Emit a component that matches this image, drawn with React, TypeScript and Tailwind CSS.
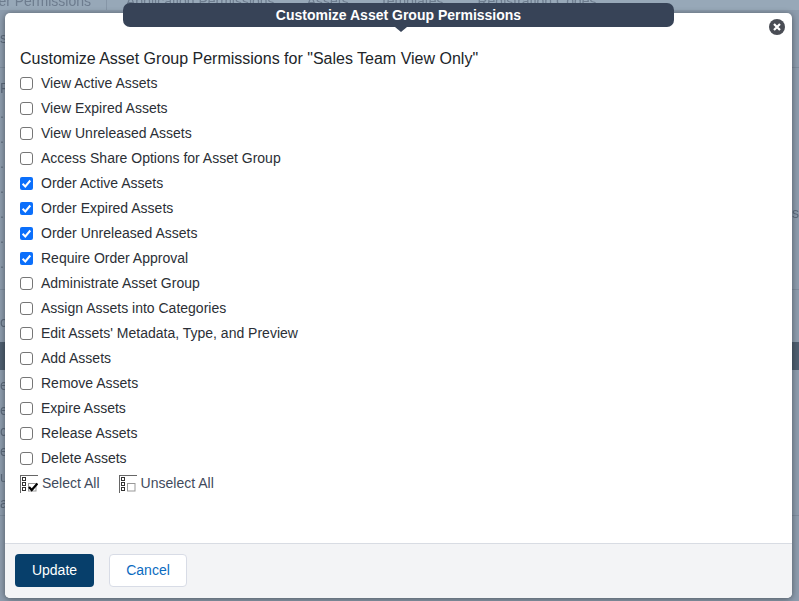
import React from 'react'

const permissions = [
  { label: 'View Active Assets', checked: false },
  { label: 'View Expired Assets', checked: false },
  { label: 'View Unreleased Assets', checked: false },
  { label: 'Access Share Options for Asset Group', checked: false },
  { label: 'Order Active Assets', checked: true },
  { label: 'Order Expired Assets', checked: true },
  { label: 'Order Unreleased Assets', checked: true },
  { label: 'Require Order Approval', checked: true },
  { label: 'Administrate Asset Group', checked: false },
  { label: 'Assign Assets into Categories', checked: false },
  { label: "Edit Assets' Metadata, Type, and Preview", checked: false },
  { label: 'Add Assets', checked: false },
  { label: 'Remove Assets', checked: false },
  { label: 'Expire Assets', checked: false },
  { label: 'Release Assets', checked: false },
  { label: 'Delete Assets', checked: false },
]

// slivers of the page that stick out left and right of the dialog
const backdropRows = [
  { h: 'h-[18px]', left: '' },
  { h: 'h-[20px]', left: 's' },
  { h: 'h-[20px]', left: '', line: true },
  { h: 'h-[10px]', left: '' },
  { h: 'h-[20px]', left: 'R' },
  { h: 'h-[2px]', left: '' },
  { h: 'h-[25px]', left: '.' },
  { h: 'h-[25px]', left: '.' },
  { h: 'h-[25px]', left: '.' },
  { h: 'h-[25px]', left: '.' },
  { h: 'h-[25px]', left: '.', right: 's' },
  { h: 'h-[25px]', left: '.' },
  { h: 'h-[25px]', left: '.' },
  { h: 'h-[15px]', left: '', line: true },
  { h: 'h-[22px]', left: '' },
  { h: 'h-[20px]', left: 'o' },
  { h: 'h-[10px]', left: '' },
  { h: 'h-[28px]', left: '', dark: true },
  { h: 'h-[5px]', left: '' },
  { h: 'h-[20px]', left: 'e' },
  { h: 'h-[5px]', left: '' },
  { h: 'h-[20px]', left: 'e' },
  { h: 'h-[22px]', left: 'c' },
  { h: 'h-[18px]', left: 'e' },
  { h: 'h-[8px]', left: '' },
  { h: 'h-[18px]', left: 'u' },
  { h: 'h-[8px]', left: '' },
  { h: 'h-[18px]', left: 'a' },
  { h: 'h-[4px]', left: '', line: true },
]

function PermissionRow({ label, checked }: { label: string; checked: boolean }) {
  return (
    <div className="flex h-[25px] items-center">
      {checked ? (
        <span className="flex h-[13px] w-[13px] items-center justify-center rounded-[2px] bg-[#0b6ffb]">
          <svg viewBox="0 0 13 13" className="h-[13px] w-[13px]" fill="none">
            <path d="M2.6 6.8l2.7 2.7 5-6" stroke="#fff" strokeWidth="2" />
          </svg>
        </span>
      ) : (
        <span className="h-[13px] w-[13px] rounded-[3px] border border-[#767676] bg-white" />
      )}
      <span className="ml-[8px] text-[14px] text-[#2b2f36]">{label}</span>
    </div>
  )
}

function ListIcon({ checked }: { checked: boolean }) {
  return (
    <svg viewBox="0 0 18 18" className="h-[18px] w-[18px] shrink-0" fill="none">
      <path d="M.5 0v18M.5 .5H18" stroke="#666" strokeWidth="1" />
      <rect x="2.5" y="2.5" width="3" height="3" stroke="#333" />
      <rect x="2.5" y="7.5" width="3" height="3" stroke="#333" />
      <rect x="2.5" y="12.5" width="3" height="3" stroke="#333" />
      <rect x="8.5" y="8.5" width="7.5" height="7.5" stroke="#999" />
      {checked && <path d="M9 12l2.7 3L17.5 8.5" stroke="#000" strokeWidth="2.2" />}
    </svg>
  )
}

export default function App() {
  return (
    <div className="relative h-[601px] w-[799px] overflow-hidden bg-[#8d9cad] font-['Liberation_Sans',Arial,sans-serif]">
      {/* page behind the overlay */}
      <div className="blur-[0.6px]">
        <div className="flex h-[10px] items-end overflow-hidden bg-[#97a8b8] text-[14px] leading-[17px] text-[#6d7c8e]">
          <div className="flex h-full w-[107px] shrink-0 items-end justify-end overflow-hidden border-r border-[#8696a7] pr-[15px]">
            <span className="whitespace-nowrap">User Permissions</span>
          </div>
          <span className="ml-[19px] shrink-0">Application Permissions</span>
          <span className="ml-[32px] shrink-0">Assets</span>
          <span className="ml-[31px] shrink-0">Templates</span>
          <span className="ml-[34px] shrink-0">Registration Codes</span>
        </div>
        {backdropRows.map((r, i) => (
          <div
            key={i}
            className={`flex items-center justify-between overflow-hidden text-[14px] leading-[16px] text-[#5d6b7c] ${r.h} ${r.dark ? 'bg-[#4f5f70]' : ''} ${r.line ? 'border-b border-[#7e8d9e]' : ''}`}
          >
            <span>{r.left}</span>
            <span>{r.right}</span>
          </div>
        ))}
      </div>

      {/* dialog */}
      <div className="absolute left-[5px] top-[13px] flex h-[585px] w-[787px] flex-col rounded-[5px] bg-white shadow-[0_1px_6px_rgba(0,0,0,0.45)]">
        <div className="absolute left-[118px] -top-[10px] flex h-[24px] w-[551px] items-center justify-center rounded-[7px] bg-[#374357] text-[14px] font-bold text-white">
          Customize Asset Group Permissions
        </div>
        <div className="absolute left-[390px] top-[14px] h-0 w-0 border-x-[6px] border-t-[5px] border-x-transparent border-t-[#374357]" />
        <button className="absolute right-[7px] top-[6px] flex h-[16px] w-[16px] items-center justify-center rounded-full bg-[#4a4d55]">
          <svg viewBox="0 0 16 16" className="h-[16px] w-[16px]" fill="none">
            <path d="M5 5l6 6M11 5l-6 6" stroke="#fff" strokeWidth="2.2" />
          </svg>
        </button>

        <div className="flex-1 pl-[15px] pt-[33px]">
          <h2 className="text-[16px] leading-[25px] text-[#212529]">
            Customize Asset Group Permissions for "Sales Team View Only"
          </h2>
          {permissions.map((p) => (
            <PermissionRow key={p.label} label={p.label} checked={p.checked} />
          ))}
          <div className="flex h-[25px] items-center text-[14px] text-[#3f4a5c]">
            <ListIcon checked />
            <span className="ml-[4px]">Select All</span>
            <span className="ml-[19px]">
              <ListIcon checked={false} />
            </span>
            <span className="ml-[4px]">Unselect All</span>
          </div>
        </div>

        <div className="flex h-[55px] items-start gap-[15px] rounded-b-[5px] border-t border-[#d8dce3] bg-[#f3f4f6] pl-[10px] pt-[10px]">
          <button className="h-[33px] w-[79px] rounded-[4px] bg-[#073f6b] text-[14px] text-white">Update</button>
          <button className="h-[33px] w-[78px] rounded-[4px] border border-[#d8dce6] bg-white text-[14px] text-[#0b6bbf]">Cancel</button>
        </div>
      </div>
    </div>
  )
}
